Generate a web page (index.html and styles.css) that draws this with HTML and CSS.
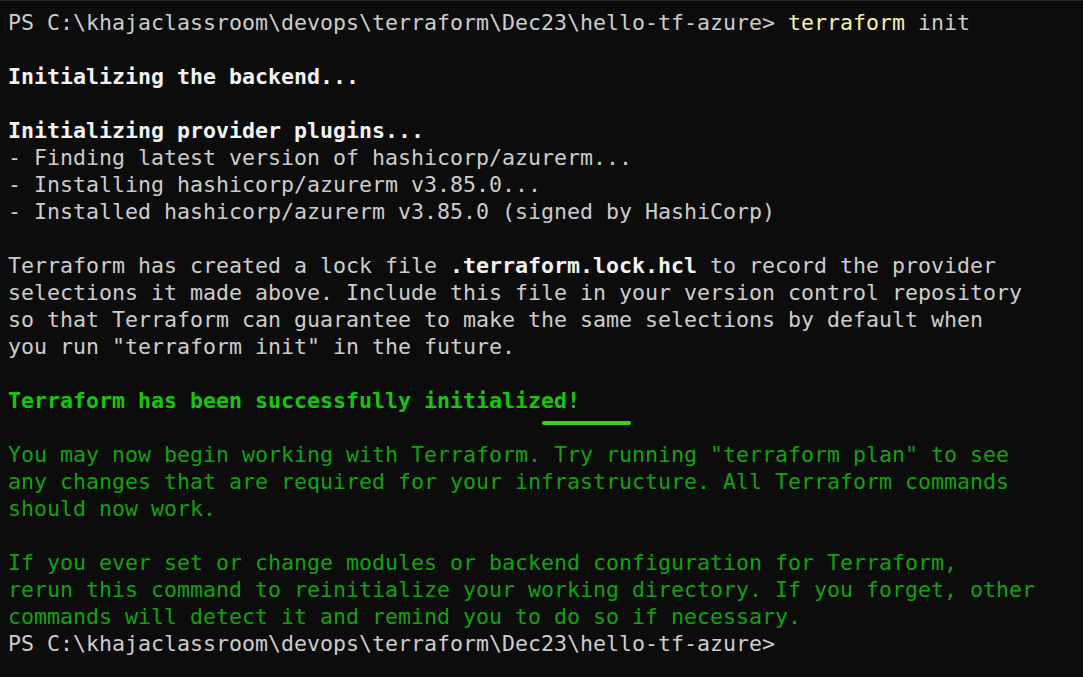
FILE: index.html
```html
<!DOCTYPE html>
<html lang="en">
<head>
<meta charset="utf-8">
<title>terraform init</title>
<link rel="stylesheet" href="styles.css">
</head>
<body>
<main class="term">
<div class="line">PS C:\khajaclassroom\devops\terraform\Dec23\hello-tf-azure&gt; <span class="cmd">terraform</span> init</div>
<div class="line"></div>
<div class="line b">Initializing the backend...</div>
<div class="line"></div>
<div class="line b">Initializing provider plugins...</div>
<div class="line">- Finding latest version of hashicorp/azurerm...</div>
<div class="line">- Installing hashicorp/azurerm v3.85.0...</div>
<div class="line">- Installed hashicorp/azurerm v3.85.0 (signed by HashiCorp)</div>
<div class="line"></div>
<div class="line">Terraform has created a lock file <span class="b">.terraform.lock.hcl</span> to record the provider</div>
<div class="line">selections it made above. Include this file in your version control repository</div>
<div class="line">so that Terraform can guarantee to make the same selections by default when</div>
<div class="line">you run "terraform init" in the future.</div>
<div class="line"></div>
<div class="line g gb success">Terraform has been successfully initialized!<span class="mark"></span></div>
<div class="line"></div>
<div class="line g">You may now begin working with Terraform. Try running "terraform plan" to see</div>
<div class="line g">any changes that are required for your infrastructure. All Terraform commands</div>
<div class="line g">should now work.</div>
<div class="line"></div>
<div class="line g">If you ever set or change modules or backend configuration for Terraform,</div>
<div class="line g">rerun this command to reinitialize your working directory. If you forget, other</div>
<div class="line g">commands will detect it and remind you to do so if necessary.</div>
<div class="line">PS C:\khajaclassroom\devops\terraform\Dec23\hello-tf-azure&gt;</div>
</main>
</body>
</html>
```
FILE: styles.css
```css
html, body {
  margin: 0;
  padding: 0;
  background: #0c0c0c;
}
body {
  width: 1083px;
  height: 677px;
  overflow: hidden;
  border-top: 1px solid #262626;
  box-sizing: border-box;
}
.term {
  padding: 8px 0 0 8px;
  font-family: "DejaVu Sans Mono", "Liberation Mono", monospace;
  font-size: 21.6px;
  color: #cccccc;
}
.line {
  height: 27px;
  line-height: 27px;
  white-space: pre;
}
.b {
  font-weight: bold;
  color: #f2f2f2;
}
.cmd {
  color: #f9f1a5;
}
.g {
  color: #13a10e;
}
.gb {
  font-weight: bold;
  color: #16c60c;
}
.success {
  position: relative;
}
.mark {
  position: absolute;
  left: 534px;
  top: 34px;
  width: 89px;
  height: 4px;
  border-radius: 2px;
  background: #3bd116;
}
```
